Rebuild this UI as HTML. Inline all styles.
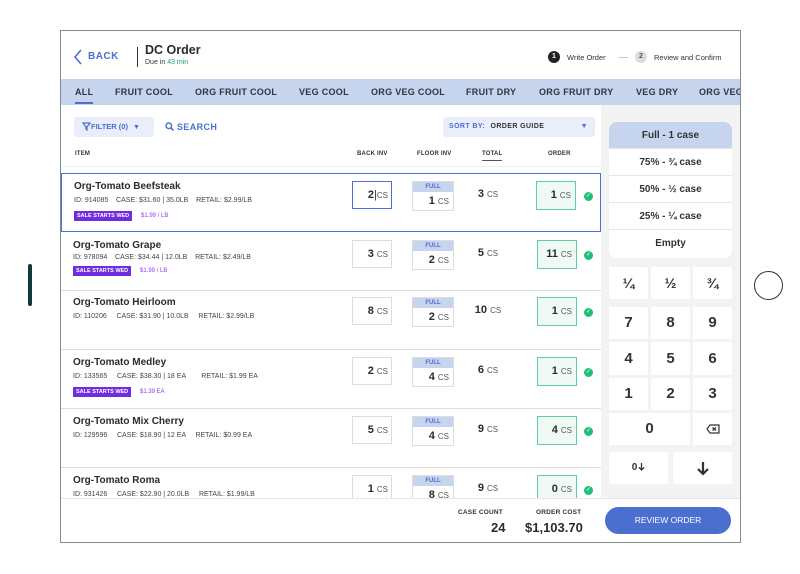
<!DOCTYPE html>
<html><head><meta charset="utf-8"><style>
*{box-sizing:border-box;margin:0;padding:0}
body{width:800px;height:574px;background:#fff;font-family:"Liberation Sans",sans-serif;color:#2b2b2b;position:relative;overflow:hidden}
.a{position:absolute}
.dev{left:60px;top:30px;width:681px;height:513px;border:1px solid #7f8f8f;overflow:hidden;background:#fff}
.tab{top:48px;left:0;width:680px;height:26px;background:#c7d4ee;font-size:9px;font-weight:bold;color:#2e3440;letter-spacing:.3px}
.tab span{position:absolute;top:8px;white-space:nowrap}
.th{font-size:6px;font-weight:bold;color:#333;letter-spacing:.2px}
.row{left:0;width:540px;height:58px;border-bottom:1.5px solid #ddd}
.nm{left:12px;top:7px;font-size:10px;font-weight:bold;color:#2b2b2b}
.id{left:12px;top:23px;font-size:7px;color:#444;white-space:pre}
.sale{left:12px;top:37px;height:10px;background:#6f2ce0;color:#fff;font-size:5.5px;font-weight:bold;padding:2px 3px;line-height:6px}
.sp{top:39px;font-size:6px;color:#8b3cf0}
.bx{width:40px;height:28px;border:1px solid #ddd;background:#fff;font-size:11px;font-weight:bold;text-align:right;padding-right:3px;line-height:26px}
.bx i,.tot i{font-style:normal;font-weight:normal;font-size:8px;color:#555}
.fl{width:42px;height:30px;border:1px solid #ddd;background:#fff}
.fl b{display:block;height:10px;background:#c7d4ee;color:#4a6fcf;font-size:6px;text-align:center;line-height:10px}
.fl div{font-size:11px;font-weight:bold;text-align:right;padding-right:4px;line-height:18px}
.fl i{font-style:normal;font-weight:normal;font-size:8px;color:#555}
.tot{font-size:11px;font-weight:bold;text-align:center;width:40px}
.od{width:40px;height:29px;border:1px solid #5fcfa3;background:#effaf5;font-size:11px;font-weight:bold;text-align:right;padding-right:4px;line-height:27px}
.od i{font-style:normal;font-weight:normal;font-size:8px;color:#555}
.ck{width:9px;height:9px;border-radius:50%;background:#1fbf7a;color:#fff;font-size:6px;text-align:center;line-height:9px}
.pn{left:540px;top:74px;width:140px;height:393px;background:#f3f3f3}
.pc{left:8px;width:123px;height:27px;background:#fff;border-bottom:1px solid #e6e6e6;text-align:center;font-size:10px;font-weight:bold;line-height:27px;color:#333}
.k{background:#fff;text-align:center;font-weight:bold;color:#333;border-radius:2px}
</style></head><body>
<div class="a" style="left:28px;top:264px;width:4px;height:42px;background:#12393b;border-radius:2px"></div>
<div class="a" style="left:754px;top:271px;width:29px;height:29px;border:1.5px solid #333;border-radius:50%"></div>
<div class="a dev">
 <svg class="a" style="left:12px;top:18px" width="10" height="16"><path d="M8 1 L2 8 L8 15" stroke="#4a6fcf" stroke-width="1.6" fill="none"/></svg>
 <div class="a" style="left:27px;top:20px;font-size:10px;font-weight:bold;color:#4a6fcf;letter-spacing:.5px">BACK</div>
 <div class="a" style="left:76px;top:16px;width:1px;height:20px;background:#333"></div>
 <div class="a" style="left:84px;top:12px;font-size:12.5px;font-weight:bold">DC Order</div>
 <div class="a" style="left:84px;top:28px;font-size:7px;color:#333">Due in <span style="color:#1fa36a">43 min</span></div>
 <div class="a" style="left:487px;top:20px;width:12px;height:12px;border-radius:50%;background:#222;color:#fff;font-size:7px;text-align:center;line-height:12px;font-weight:bold">1</div>
 <div class="a" style="left:506px;top:22px;font-size:7.5px;color:#333">Write Order</div>
 <div class="a" style="left:557px;top:26px;width:10px;height:1px;background:#ccc"></div>
 <div class="a" style="left:574px;top:20px;width:12px;height:12px;border-radius:50%;background:#ddd;color:#555;font-size:7px;text-align:center;line-height:12px;font-weight:bold">2</div>
 <div class="a" style="left:593px;top:22px;font-size:7.5px;color:#333">Review and Confirm</div>
 <div class="a tab"><span style="left:14px">ALL</span><span style="left:54px">FRUIT COOL</span><span style="left:134px">ORG FRUIT COOL</span><span style="left:238px">VEG COOL</span><span style="left:310px">ORG VEG COOL</span><span style="left:405px">FRUIT DRY</span><span style="left:478px">ORG FRUIT DRY</span><span style="left:575px">VEG DRY</span><span style="left:638px">ORG VEG</span>
 <div class="a" style="left:14px;top:23px;width:18px;height:2px;background:#4a6fcf"></div></div>
 <div class="a" style="left:13px;top:86px;width:80px;height:20px;background:#e9eefa;border-radius:3px;font-size:7.5px;font-weight:bold;color:#4a6fcf;line-height:20px;padding-left:8px">
  <svg style="vertical-align:-2px" width="9" height="9"><path d="M1 1H8L5 5V8L4 7V5Z" stroke="#4a6fcf" fill="none" stroke-width="1.2"/></svg>FILTER (0) <span style="font-size:7px;margin-left:3px">▼</span></div>
 <div class="a" style="left:104px;top:91px;font-size:9px;font-weight:bold;color:#4a6fcf;letter-spacing:.4px"><svg style="vertical-align:-1px" width="9" height="9"><circle cx="3.8" cy="3.8" r="2.8" stroke="#4a6fcf" stroke-width="1.4" fill="none"/><path d="M6 6L8.5 8.5" stroke="#4a6fcf" stroke-width="1.6"/></svg> SEARCH</div>
 <div class="a" style="left:382px;top:86px;width:152px;height:20px;background:#e9eefa;border-radius:3px;font-size:7px;line-height:20px;padding-left:6px;letter-spacing:.4px"><span style="color:#4a6fcf;font-weight:bold">SORT BY:</span> <span style="font-weight:bold;color:#333;margin-left:3px">ORDER GUIDE</span><span style="position:absolute;right:7px;color:#4a6fcf;font-size:7px">▼</span></div>
 <div class="a th" style="left:14px;top:120px">ITEM</div>
 <div class="a th" style="left:296px;top:120px">BACK INV</div>
 <div class="a th" style="left:356px;top:120px">FLOOR INV</div>
 <div class="a th" style="left:421px;top:120px;border-bottom:1px solid #555;padding-bottom:3px">TOTAL</div>
 <div class="a th" style="left:487px;top:120px">ORDER</div>
 <div class="a" style="left:0;top:135px;width:540px;height:1px;background:#eee"></div>

 <div class="a row" style="top:142px;border:1.5px solid #4a6fcf;height:59px"><div class="a nm">Org-Tomato Beefsteak</div><div class="a id">ID: 914085    CASE: $31.60 | 35.0LB    RETAIL: $2.99/LB</div><div class="a sale">SALE STARTS WED</div><div class="a sp" style="left:79px">$1.99 / LB</div>
  <div class="a bx" style="left:290px;top:7px;border:1.5px solid #4a6fcf">2<span style="color:#333;font-weight:normal">|</span><i>CS</i></div><div class="a fl" style="left:350px;top:7px"><b>FULL</b><div>1 <i>CS</i></div></div><div class="a tot" style="left:406px;top:14px">3 <i>CS</i></div><div class="a od" style="left:474px;top:7px">1 <i>CS</i></div><div class="a ck" style="left:522px;top:18px">✓</div></div>

 <div class="a row" style="top:202px"><div class="a nm">Org-Tomato Grape</div><div class="a id" style="top:21px">ID: 978094    CASE: $34.44 | 12.0LB    RETAIL: $2.49/LB</div><div class="a sale" style="top:33px">SALE STARTS WED</div><div class="a sp" style="left:79px;top:35px">$1.99 / LB</div>
  <div class="a bx" style="left:291px;top:7px">3 <i>CS</i></div><div class="a fl" style="left:351px;top:7px"><b>FULL</b><div>2 <i>CS</i></div></div><div class="a tot" style="left:407px;top:14px">5 <i>CS</i></div><div class="a od" style="left:476px;top:7px">11 <i>CS</i></div><div class="a ck" style="left:523px;top:18px">✓</div></div>

 <div class="a row" style="top:259px;height:60px"><div class="a nm">Org-Tomato Heirloom</div><div class="a id" style="top:23px">ID: 110206     CASE: $31.90 | 10.0LB     RETAIL: $2.99/LB</div>
  <div class="a bx" style="left:291px;top:7px">8 <i>CS</i></div><div class="a fl" style="left:351px;top:7px"><b>FULL</b><div>2 <i>CS</i></div></div><div class="a tot" style="left:407px;top:14px">10 <i>CS</i></div><div class="a od" style="left:476px;top:7px">1 <i>CS</i></div><div class="a ck" style="left:523px;top:18px">✓</div></div>

 <div class="a row" style="top:319px;height:59px"><div class="a nm">Org-Tomato Medley</div><div class="a id" style="top:23px">ID: 133565     CASE: $38.30 | 18 EA        RETAIL: $1.99 EA</div><div class="a sale" style="top:37px">SALE STARTS WED</div><div class="a sp" style="left:79px">$1.39 EA</div>
  <div class="a bx" style="left:291px;top:7px">2 <i>CS</i></div><div class="a fl" style="left:351px;top:7px"><b>FULL</b><div>4 <i>CS</i></div></div><div class="a tot" style="left:407px;top:14px">6 <i>CS</i></div><div class="a od" style="left:476px;top:7px">1 <i>CS</i></div><div class="a ck" style="left:523px;top:18px">✓</div></div>

 <div class="a row" style="top:378px;height:59px"><div class="a nm">Org-Tomato Mix Cherry</div><div class="a id" style="top:23px">ID: 129596     CASE: $18.90 | 12 EA     RETAIL: $0.99 EA</div>
  <div class="a bx" style="left:291px;top:7px">5 <i>CS</i></div><div class="a fl" style="left:351px;top:7px"><b>FULL</b><div>4 <i>CS</i></div></div><div class="a tot" style="left:407px;top:14px">9 <i>CS</i></div><div class="a od" style="left:476px;top:7px">4 <i>CS</i></div><div class="a ck" style="left:523px;top:18px">✓</div></div>

 <div class="a row" style="top:437px;border:none"><div class="a nm">Org-Tomato Roma</div><div class="a id" style="top:23px">ID: 931426     CASE: $22.90 | 20.0LB     RETAIL: $1.99/LB</div>
  <div class="a bx" style="left:291px;top:7px">1 <i>CS</i></div><div class="a fl" style="left:351px;top:7px"><b>FULL</b><div>8 <i>CS</i></div></div><div class="a tot" style="left:407px;top:14px">9 <i>CS</i></div><div class="a od" style="left:476px;top:7px">0 <i>CS</i></div><div class="a ck" style="left:523px;top:18px">✓</div></div>

 <div class="a pn">
  <div class="a" style="left:8px;top:17px;width:123px;height:136px;background:#fff;border-radius:8px;overflow:hidden">
   <div class="a pc" style="left:0;top:0;background:#c7d4ee">Full - 1 case</div>
   <div class="a pc" style="left:0;top:27px">75% - ¾ case</div>
   <div class="a pc" style="left:0;top:54px">50% - ½ case</div>
   <div class="a pc" style="left:0;top:81px">25% - ¼ case</div>
   <div class="a pc" style="left:0;top:108px;border:none">Empty</div>
  </div>
  <div class="a k" style="left:8px;top:162px;width:39px;height:32px;line-height:32px;font-size:14px">¼</div>
  <div class="a k" style="left:50px;top:162px;width:39px;height:32px;line-height:32px;font-size:14px">½</div>
  <div class="a k" style="left:92px;top:162px;width:39px;height:32px;line-height:32px;font-size:14px">¾</div>
  <div class="a k" style="left:8px;top:202px;width:39px;height:32px;line-height:32px;font-size:15px">7</div>
  <div class="a k" style="left:50px;top:202px;width:39px;height:32px;line-height:32px;font-size:15px">8</div>
  <div class="a k" style="left:92px;top:202px;width:39px;height:32px;line-height:32px;font-size:15px">9</div>
  <div class="a k" style="left:8px;top:237px;width:39px;height:33px;line-height:33px;font-size:15px">4</div>
  <div class="a k" style="left:50px;top:237px;width:39px;height:33px;line-height:33px;font-size:15px">5</div>
  <div class="a k" style="left:92px;top:237px;width:39px;height:33px;line-height:33px;font-size:15px">6</div>
  <div class="a k" style="left:8px;top:273px;width:39px;height:32px;line-height:32px;font-size:15px">1</div>
  <div class="a k" style="left:50px;top:273px;width:39px;height:32px;line-height:32px;font-size:15px">2</div>
  <div class="a k" style="left:92px;top:273px;width:39px;height:32px;line-height:32px;font-size:15px">3</div>
  <div class="a k" style="left:8px;top:308px;width:81px;height:32px;line-height:32px;font-size:15px">0</div>
  <div class="a k" style="left:92px;top:308px;width:39px;height:32px"><svg style="margin-top:11px" width="14" height="10"><path d="M4 1H13V9H4L1 5Z" stroke="#333" stroke-width="1.2" fill="none"/><path d="M6.5 3.5L10 6.5M10 3.5L6.5 6.5" stroke="#333" stroke-width="1.2"/></svg></div>
  <div class="a k" style="left:8px;top:347px;width:59px;height:32px;line-height:32px;font-size:10px">0<svg width="7" height="8" style="vertical-align:-1px;margin-left:1px"><path d="M3.5 0V7M0.8 4.3L3.5 7L6.2 4.3" stroke="#333" stroke-width="1.3" fill="none"/></svg></div>
  <div class="a k" style="left:72px;top:347px;width:59px;height:32px"><svg style="margin-top:9px" width="14" height="15"><path d="M7 1V13M2 8L7 13L12 8" stroke="#333" stroke-width="2.2" fill="none"/></svg></div>
 </div>
 <div class="a" style="left:0;top:467px;width:680px;height:46px;background:#fff;border-top:1px solid #e6e6e6"></div>
 <div class="a th" style="left:397px;top:478px;font-size:6.5px">CASE COUNT</div>
 <div class="a" style="left:430px;top:489px;font-size:13px;font-weight:bold">24</div>
 <div class="a th" style="left:475px;top:478px;font-size:6.5px">ORDER COST</div>
 <div class="a" style="left:464px;top:489px;font-size:13px;font-weight:bold">$1,103.70</div>
 <div class="a" style="left:544px;top:476px;width:126px;height:27px;background:#4a6fcf;border-radius:14px;color:#fff;font-size:8.5px;text-align:center;line-height:27px">REVIEW ORDER</div>
</div>
</body></html>
